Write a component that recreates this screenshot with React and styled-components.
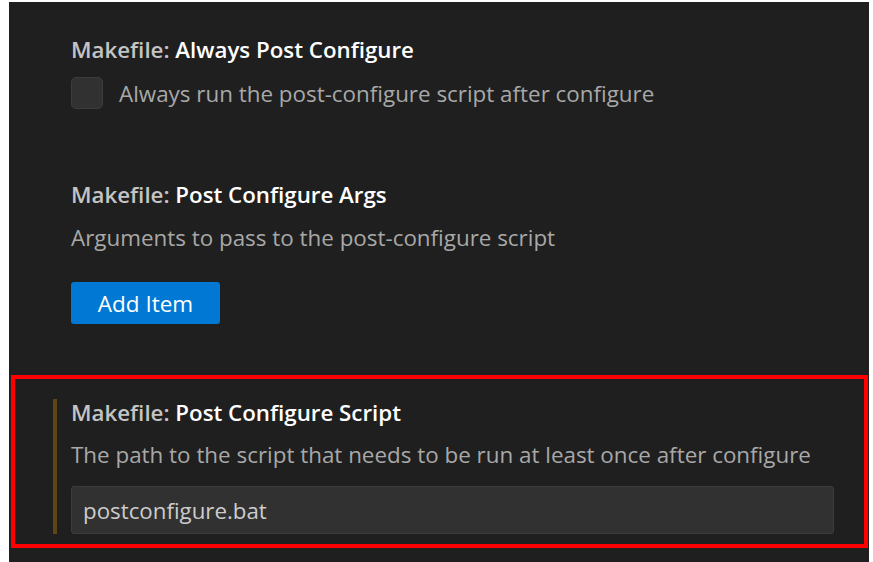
import React from 'react';
import styled, { createGlobalStyle } from 'styled-components';

const GlobalStyle = createGlobalStyle`
  html, body {
    margin: 0;
    padding: 0;
    background: #ffffff;
  }
  body {
    font-family: "Open Sans", "Noto Sans", sans-serif;
  }
`;

const Panel = styled.div`
  display: flex;
  flex-direction: column;
  gap: 34px;
  margin: 2px 4px 0 9px;
  padding: 10px 1px 0 2px;
  height: 550px;
  background: #1f1f1f;
  overflow: hidden;
`;

const SettingItem = styled.div`
  display: flex;
  border: 4px solid ${({ highlighted }) => (highlighted ? '#ff0000' : 'transparent')};
  padding: 20px 30px 10px 38px;
`;

const ModifiedBar = styled.div`
  flex: 0 0 4px;
  background: ${({ modified }) => (modified ? '#5d4616' : 'transparent')};
  margin-right: 14px;
`;

const Content = styled.div`
  flex: 1;
  display: flex;
  flex-direction: column;
`;

const Title = styled.div`
  font-size: 22.3px;
  font-weight: 600;
  line-height: 28px;
  color: #ffffff;
  white-space: nowrap;
`;

const Category = styled.span`
  color: #c4c4c4;
`;

const Description = styled.div`
  margin-top: ${({ top }) => top}px;
  font-size: 22.4px;
  line-height: 28px;
  color: #a8a8a8;
  white-space: nowrap;
`;

const CheckRow = styled.label`
  display: flex;
  align-items: center;
  gap: 16px;
  margin-top: 13px;
  height: 32px;
  font-size: 22.4px;
  color: #a8a8a8;
  white-space: nowrap;
`;

const Checkbox = styled.span`
  box-sizing: border-box;
  width: 32px;
  height: 32px;
  border-radius: 5px;
  background: #313131;
  border: 1px solid #3c3c3c;
`;

const AddButton = styled.button`
  align-self: flex-start;
  margin: 30px 0 3px;
  width: 149px;
  height: 42px;
  border: none;
  border-radius: 3px;
  background: #0078d4;
  color: #ffffff;
  font-family: "Open Sans", "Noto Sans", sans-serif;
  font-size: 22.5px;
  cursor: pointer;
`;

const TextInput = styled.div`
  box-sizing: border-box;
  margin-top: 17px;
  height: 48px;
  display: flex;
  align-items: center;
  padding: 0 11px;
  background: #313131;
  border: 1px solid #3c3c3c;
  border-radius: 3px;
  font-size: 22.3px;
  color: #cccccc;
`;

const App = () => (
  <>
    <GlobalStyle />
    <Panel>
      <SettingItem>
        <ModifiedBar />
        <Content>
          <Title>
            <Category>Makefile: </Category>Always Post Configure
          </Title>
          <CheckRow>
            <Checkbox />
            Always run the post-configure script after configure
          </CheckRow>
        </Content>
      </SettingItem>

      <SettingItem>
        <ModifiedBar />
        <Content>
          <Title>
            <Category>Makefile: </Category>Post Configure Args
          </Title>
          <Description top={15}>Arguments to pass to the post-configure script</Description>
          <AddButton>Add Item</AddButton>
        </Content>
      </SettingItem>

      <SettingItem highlighted>
        <ModifiedBar modified />
        <Content>
          <Title>
            <Category>Makefile: </Category>Post Configure Script
          </Title>
          <Description top={14}>
            The path to the script that needs to be run at least once after configure
          </Description>
          <TextInput>postconfigure.bat</TextInput>
        </Content>
      </SettingItem>
    </Panel>
  </>
);

export default App;
